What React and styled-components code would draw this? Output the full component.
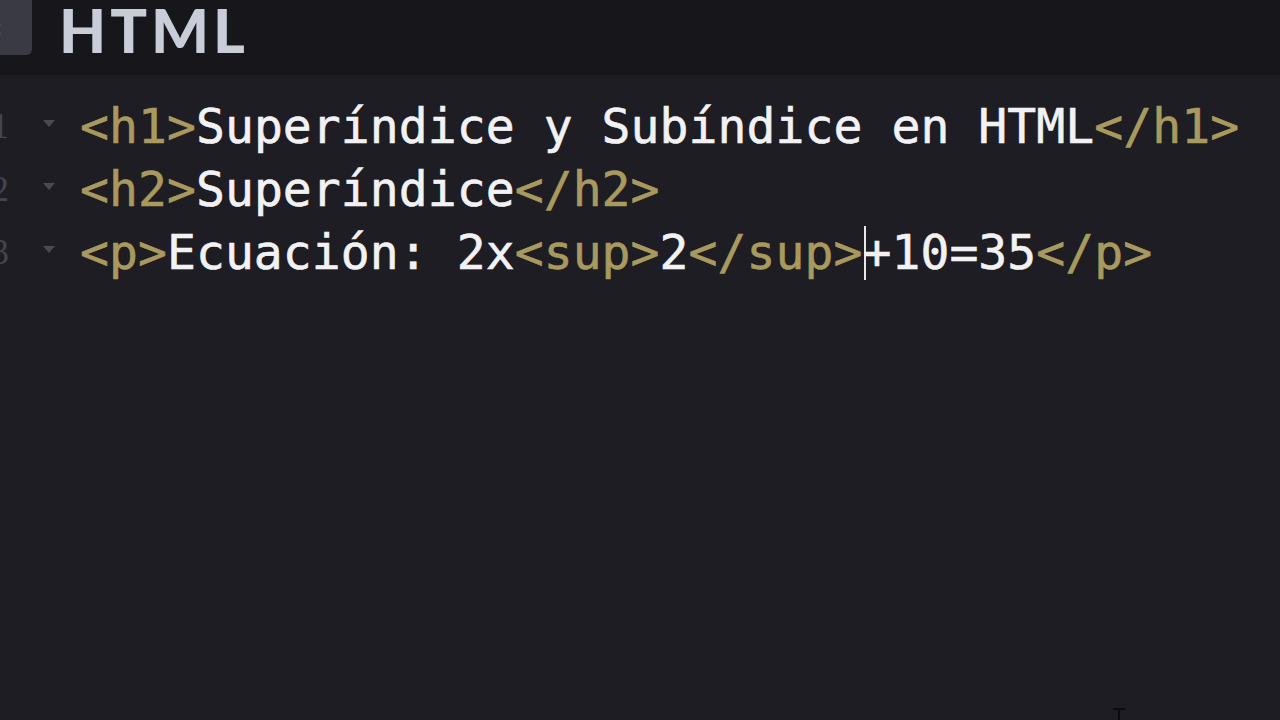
import React from 'react';
import styled, { createGlobalStyle } from 'styled-components';

const GlobalStyle = createGlobalStyle`
  html, body {
    margin: 0;
    padding: 0;
    background: #1d1d23;
    overflow: hidden;
  }
`;

const Screen = styled.div`
  width: 1280px;
  height: 720px;
  background: #1d1d23;
  display: flex;
  flex-direction: column;
  overflow: hidden;
`;

const TopBar = styled.div`
  height: 75px;
  background: #17161b;
  display: flex;
  align-items: flex-start;
  gap: 27px;
`;

const Tab = styled.div`
  width: 32px;
  height: 55px;
  background: #3a3a44;
  border-radius: 0 0 6px 0;
  display: flex;
  align-items: center;
  span {
    color: #f0f0f2;
    font-family: "Liberation Sans", sans-serif;
    font-weight: bold;
    font-size: 24px;
    margin-left: -7px;
  }
`;

const Title = styled.h1`
  margin: 0;
  font-family: Lato, "Liberation Sans", sans-serif;
  font-weight: 900;
  font-size: 61px;
  line-height: 60px;
  letter-spacing: 4px;
  color: #c9cdd8;
`;

const Editor = styled.div`
  padding-top: 19px;
  display: flex;
  flex-direction: column;
`;

const Line = styled.div`
  display: flex;
  align-items: center;
  height: 63px;
`;

const Gutter = styled.div`
  width: 80px;
  display: flex;
  align-items: center;
  flex-shrink: 0;
`;

const LineNo = styled.span`
  width: 15px;
  margin-left: -9px;
  text-align: right;
  font-family: "Liberation Serif", serif;
  font-size: 36px;
  color: #45454e;
`;

const Fold = styled.span`
  margin-left: 37px;
  width: 0;
  height: 0;
  border-left: 6px solid transparent;
  border-right: 6px solid transparent;
  border-top: 7px solid #4a4a55;
  margin-top: -4px;
`;

const Code = styled.div`
  font-family: "DejaVu Sans Mono", "Liberation Mono", monospace;
  font-size: 48px;
  white-space: pre;
  color: #f2f2f4;
  letter-spacing: 0.08px;
  -webkit-text-stroke: 0.6px currentColor;
`;

const Tag = styled.span`
  color: #a89a5e;
`;

const Caret = styled.span`
  display: inline-block;
  width: 0;
  height: 54px;
  border-left: 2px solid #e8e8e8;
  margin-left: 2px;
  margin-right: -4px;
  vertical-align: middle;
  margin-top: -6px;
`;

const Pointer = styled.div`
  position: absolute;
  left: 1113px;
  top: 708px;
  width: 12px;
  height: 12px;
  border-top: 2px solid #0c0c0f;
  &::after {
    content: '';
    position: absolute;
    left: 5px;
    top: 0;
    width: 2px;
    height: 12px;
    background: #0c0c0f;
  }
`;

const lines = [
  [['t', '<h1>'], ['s', 'Superíndice y Subíndice en HTML'], ['t', '</h1>']],
  [['t', '<h2>'], ['s', 'Superíndice'], ['t', '</h2>']],
  [
    ['t', '<p>'], ['s', 'Ecuación: 2x'], ['t', '<sup>'], ['s', '2'], ['t', '</sup>'],
    ['c'], ['s', '+10=35'], ['t', '</p>'],
  ],
];

const App = () => (
  <Screen>
    <GlobalStyle />
    <TopBar>
      <Tab><span>‹</span></Tab>
      <Title>HTML</Title>
    </TopBar>
    <Editor>
      {lines.map((parts, i) => (
        <Line key={i}>
          <Gutter>
            <LineNo>{i + 1}</LineNo>
            <Fold />
          </Gutter>
          <Code>
            {parts.map(([kind, text], j) =>
              kind === 't' ? <Tag key={j}>{text}</Tag>
                : kind === 'c' ? <Caret key={j} />
                : <React.Fragment key={j}>{text}</React.Fragment>
            )}
          </Code>
        </Line>
      ))}
    </Editor>
    <Pointer />
  </Screen>
);

export default App;
